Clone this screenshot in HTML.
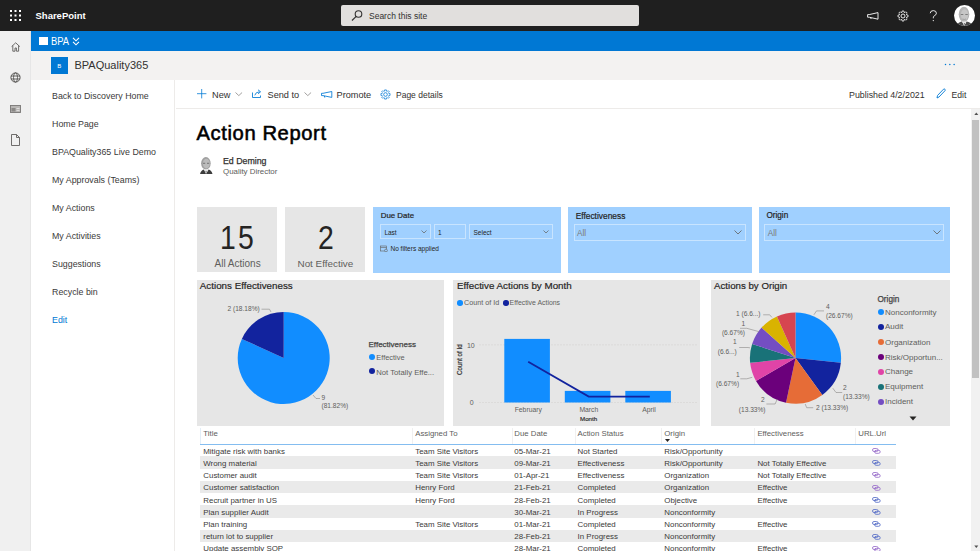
<!DOCTYPE html>
<html><head><meta charset="utf-8">
<style>
*{box-sizing:border-box;margin:0;padding:0}
html,body{width:980px;height:551px;overflow:hidden;background:#fff;font-family:"Liberation Sans",sans-serif;color:#323130}
.a{position:absolute;white-space:nowrap;line-height:1}
#suite{position:absolute;left:0;top:0;width:980px;height:31px;background:#1f1f1f}
#rail{position:absolute;left:0;top:31px;width:31px;height:520px;background:#f0f0f0;border-right:1px solid #e6e6e6}
#hub{position:absolute;left:31px;top:31px;width:949px;height:20px;background:#0078d4}
#site{position:absolute;left:31px;top:51px;width:949px;height:29px;background:#f3f2f1}
#nav{position:absolute;left:31px;top:80px;width:144px;height:471px;background:#fff;border-right:1px solid #edebe9}
#cmd{position:absolute;left:176px;top:80px;width:804px;height:29px;background:#fff;border-bottom:1px solid #edebe9}
.navi{font-size:9.5px;color:#3b3a39;transform:scaleX(0.93);transform-origin:0 0}
.cmdt{font-size:9.2px;color:#323130;margin-top:0.5px}
.card{position:absolute;background:#e6e6e6}
.slicer{position:absolute;background:#a0d0ff}
.sbox{position:absolute;border:1px solid #c8e4ff}
.chart{position:absolute;background:#e6e6e6}
.ct{font-size:9.8px;font-weight:400;color:#252423;-webkit-text-stroke:0.18px #252423}
.lbl{font-size:6.6px;color:#605e5c}
.row{position:absolute;left:200px;width:696px;height:12.2px}
.cell{position:absolute;font-size:7.9px;color:#252423;top:2px}
</style></head><body>

<!-- suite bar -->
<div id="suite">
  <svg class="a" style="left:10px;top:10px" width="11" height="11" viewBox="0 0 11 11" fill="#fff">
    <rect x="0" y="0" width="2" height="2"/><rect x="4.5" y="0" width="2" height="2"/><rect x="9" y="0" width="2" height="2"/>
    <rect x="0" y="4.5" width="2" height="2"/><rect x="4.5" y="4.5" width="2" height="2"/><rect x="9" y="4.5" width="2" height="2"/>
    <rect x="0" y="9" width="2" height="2"/><rect x="4.5" y="9" width="2" height="2"/><rect x="9" y="9" width="2" height="2"/>
  </svg>
  <div class="a" style="left:35.5px;top:11px;font-size:9.5px;font-weight:700;color:#fff">SharePoint</div>
  <div class="a" style="left:341px;top:5px;width:298px;height:20.5px;background:#e1dfdd;border-radius:2px"></div>
  <svg class="a" style="left:351px;top:10px" width="12" height="11" viewBox="0 0 12 11"><circle cx="7.5" cy="4" r="3.3" fill="none" stroke="#323130" stroke-width="1.1"/><line x1="5.2" y1="6.4" x2="1" y2="10.5" stroke="#323130" stroke-width="1.2"/></svg>
  <div class="a" style="left:369px;top:11.5px;font-size:8.5px;color:#323130">Search this site</div>
  <!-- megaphone -->
  <svg class="a" style="left:867px;top:12px" width="12" height="8" viewBox="0 0 12 8"><path d="M0.6 2.6 H2.2 L11 0.6 V7.2 L2.2 5.2 H0.6 Z M3.5 5.5 L4.2 7" fill="none" stroke="#fff" stroke-width="0.9"/></svg>
  <!-- gear -->
  <svg class="a" style="left:897px;top:10px" width="12" height="12" viewBox="0 0 12 12"><circle cx="6" cy="6" r="2" fill="none" stroke="#fff" stroke-width="0.9"/><path d="M5.06 2.22 L5.01 1.00 L6.99 1.00 L6.94 2.22 L8.01 2.66 L8.83 1.76 L10.24 3.17 L9.34 3.99 L9.78 5.06 L11.00 5.01 L11.00 6.99 L9.78 6.94 L9.34 8.01 L10.24 8.83 L8.83 10.24 L8.01 9.34 L6.94 9.78 L6.99 11.00 L5.01 11.00 L5.06 9.78 L3.99 9.34 L3.17 10.24 L1.76 8.83 L2.66 8.01 L2.22 6.94 L1.00 6.99 L1.00 5.01 L2.22 5.06 L2.66 3.99 L1.76 3.17 L3.17 1.76 L3.99 2.66 Z" fill="none" stroke="#fff" stroke-width="0.75" stroke-linejoin="round"/></svg>
  <svg class="a" style="left:929px;top:10px" width="9" height="12" viewBox="0 0 9 12"><path d="M1.2 3.2 Q1.4 0.6 4.3 0.6 Q7.4 0.7 7.4 3.2 Q7.3 4.9 5.2 5.9 Q4.3 6.5 4.3 7.9 V8.3" fill="none" stroke="#fff" stroke-width="0.9"/><circle cx="4.3" cy="10.6" r="0.6" fill="#fff"/></svg>
  <!-- avatar -->
  <div class="a" style="left:954.3px;top:4.6px;width:21px;height:21px;border-radius:50%;background:#fff;overflow:hidden">
    <svg width="21" height="21" viewBox="0 0 21 21"><ellipse cx="10" cy="9.3" rx="5.3" ry="7.6" fill="#b4b4b4"/><ellipse cx="10.5" cy="9.8" rx="3.6" ry="5.6" fill="#c6c6c6"/><path d="M6.8 9.5 H9.3 M11.3 9.5 H13.8" stroke="#6a6a6a" stroke-width="0.8"/><path d="M8.5 14 Q10.3 15 12 14" stroke="#8a8a8a" stroke-width="0.6" fill="none"/><path d="M2 21 Q4 17 8 16.5 L10.3 20.5 L12.5 16.5 Q17 17 19 21 Z" fill="#4a4a4a"/><path d="M8 16.5 L10.3 21 L12.5 16.5 Z" fill="#e8e8e8"/><path d="M9.8 18 L10.3 21 L10.8 18 Z" fill="#555"/></svg>
  </div>
</div>

<!-- left rail -->
<div id="rail">
  <svg class="a" style="left:10.5px;top:11px" width="10" height="10" viewBox="0 0 10 10"><path d="M0.6 4.6 L4.7 0.8 L8.8 4.6 M1.8 3.6 V9.2 H4 V6 H5.4 V9.2 H7.6 V3.6" fill="none" stroke="#605e5c" stroke-width="0.9" stroke-linejoin="round"/></svg>
  <svg class="a" style="left:9.5px;top:41px" width="11" height="11" viewBox="0 0 11 11"><circle cx="5.5" cy="5.5" r="4.6" fill="none" stroke="#484644" stroke-width="0.9"/><ellipse cx="5.5" cy="5.5" rx="2" ry="4.6" fill="none" stroke="#484644" stroke-width="0.8"/><line x1="1" y1="4" x2="10" y2="4" stroke="#484644" stroke-width="0.8"/><line x1="1" y1="7" x2="10" y2="7" stroke="#484644" stroke-width="0.8"/></svg>
  <svg class="a" style="left:10px;top:74px" width="11" height="8" viewBox="0 0 11 8"><rect x="0.5" y="0.5" width="10" height="7" fill="#b8b6b4" stroke="#797775" stroke-width="0.9"/><rect x="1.5" y="3" width="4" height="3.5" fill="#8a8886"/><line x1="6.5" y1="3.5" x2="9.5" y2="3.5" stroke="#eee" stroke-width="0.7"/><line x1="6.5" y1="5.5" x2="9.5" y2="5.5" stroke="#eee" stroke-width="0.7"/></svg>
  <svg class="a" style="left:11px;top:103px" width="9" height="12" viewBox="0 0 9 12"><path d="M0.5 0.5 H5.5 L8.5 3.5 V11.5 H0.5 Z M5.5 0.5 V3.5 H8.5" fill="none" stroke="#605e5c" stroke-width="0.9"/></svg>
</div>

<!-- hub bar -->
<div id="hub">
  <div class="a" style="left:8px;top:6px;width:9px;height:8px;background:#fff"></div>
  <div class="a" style="left:20px;top:5.5px;font-size:10.4px;color:#fff;transform:scaleX(0.9);transform-origin:0 0">BPA</div>
  <svg class="a" style="left:41px;top:6px" width="8" height="9" viewBox="0 0 8 9"><path d="M1 0.8 L4 3.8 L7 0.8 M1 4.8 L4 7.8 L7 4.8" fill="none" stroke="#fff" stroke-width="1.1"/></svg>
</div>

<!-- site header -->
<div id="site">
  <div class="a" style="left:20px;top:5.5px;width:17px;height:17px;background:#0078d4"></div>
  <div class="a" style="left:26.3px;top:11.8px;font-size:6px;color:#fff">B</div>
  <div class="a" style="left:43.5px;top:9px;font-size:11px;color:#323130">BPAQuality365</div>
  <svg class="a" style="left:913px;top:12px" width="12" height="3" viewBox="0 0 12 3"><circle cx="1.5" cy="1.5" r="0.75" fill="#0078d4"/><circle cx="5.8" cy="1.5" r="0.75" fill="#0078d4"/><circle cx="10.1" cy="1.5" r="0.75" fill="#0078d4"/></svg>
</div>

<!-- left nav -->
<div id="nav">
  <div class="a navi" style="left:21px;top:10.7px">Back to Discovery Home</div>
  <div class="a navi" style="left:21px;top:38.7px">Home Page</div>
  <div class="a navi" style="left:21px;top:66.7px">BPAQuality365 Live Demo</div>
  <div class="a navi" style="left:21px;top:94.7px">My Approvals (Teams)</div>
  <div class="a navi" style="left:21px;top:122.7px">My Actions</div>
  <div class="a navi" style="left:21px;top:150.7px">My Activities</div>
  <div class="a navi" style="left:21px;top:178.7px">Suggestions</div>
  <div class="a navi" style="left:21px;top:206.7px">Recycle bin</div>
  <div class="a navi" style="left:21px;top:234.7px;color:#0078d4">Edit</div>
</div>

<!-- command bar -->
<div id="cmd">
  <svg class="a" style="left:20.5px;top:8.9px" width="10" height="10" viewBox="0 0 10 10"><path d="M4.7 0 V9.4 M0 4.7 H9.4" stroke="#0078d4" stroke-width="0.8"/></svg>
  <div class="a cmdt" style="left:36px;top:10px">New</div>
  <svg class="a" style="left:59px;top:11.7px" width="8" height="5" viewBox="0 0 8 5"><path d="M0.5 0.5 L3.8 3.6 L7.1 0.5" fill="none" stroke="#8a8886" stroke-width="0.8"/></svg>
  <svg class="a" style="left:76px;top:9px" width="11" height="9" viewBox="0 0 11 9"><path d="M0.5 3.5 V8.5 H8.5 V6.5 M2.8 6.3 Q3.5 3 7.5 2.8 M6 0.8 L8.6 2.8 L6 4.8" fill="none" stroke="#0078d4" stroke-width="0.85"/></svg>
  <div class="a cmdt" style="left:91.5px;top:10px">Send to</div>
  <svg class="a" style="left:128px;top:11.7px" width="8" height="5" viewBox="0 0 8 5"><path d="M0.5 0.5 L3.8 3.6 L7.1 0.5" fill="none" stroke="#8a8886" stroke-width="0.8"/></svg>
  <svg class="a" style="left:145px;top:10.5px" width="12" height="8" viewBox="0 0 12 8"><path d="M0.5 2.3 H2 L10.8 0.5 V6.4 L2 4.6 H0.5 Z M3.3 4.9 L3.8 6.6" fill="none" stroke="#0078d4" stroke-width="0.85"/></svg>
  <div class="a cmdt" style="left:160.5px;top:10px">Promote</div>
  <svg class="a" style="left:204px;top:8.5px" width="11" height="11" viewBox="0 0 12 12"><circle cx="6" cy="6" r="2" fill="none" stroke="#0078d4" stroke-width="0.85"/><path d="M5.06 2.22 L5.01 1.00 L6.99 1.00 L6.94 2.22 L8.01 2.66 L8.83 1.76 L10.24 3.17 L9.34 3.99 L9.78 5.06 L11.00 5.01 L11.00 6.99 L9.78 6.94 L9.34 8.01 L10.24 8.83 L8.83 10.24 L8.01 9.34 L6.94 9.78 L6.99 11.00 L5.01 11.00 L5.06 9.78 L3.99 9.34 L3.17 10.24 L1.76 8.83 L2.66 8.01 L2.22 6.94 L1.00 6.99 L1.00 5.01 L2.22 5.06 L2.66 3.99 L1.76 3.17 L3.17 1.76 L3.99 2.66 Z" fill="none" stroke="#0078d4" stroke-width="0.75" stroke-linejoin="round"/></svg>
  <div class="a cmdt" style="left:220px;top:10px;font-size:9.2px;transform:scaleX(0.925);transform-origin:0 0">Page details</div>
  <div class="a cmdt" style="left:673px;top:10px;font-size:9.3px;transform:scaleX(0.95);transform-origin:0 0">Published 4/2/2021</div>
  <svg class="a" style="left:760px;top:8px" width="10" height="11" viewBox="0 0 10 11"><path d="M1 10 L1.5 7.5 L7.5 1.2 Q8.3 0.6 9 1.3 Q9.6 2 9 2.7 L3 9 Z" fill="none" stroke="#0078d4" stroke-width="0.9"/></svg>
  <div class="a cmdt" style="left:775.5px;top:10px;font-size:8.6px">Edit</div>
</div>

<!-- scrollbar -->
<div class="a" style="left:971px;top:109px;width:9px;height:442px;background:#f1f1f1"></div>
<div class="a" style="left:972px;top:120px;width:7px;height:258px;background:#c1c1c1"></div>
<svg class="a" style="left:973.5px;top:111.5px" width="5" height="4" viewBox="0 0 5 4"><path d="M0.3 3 L2.3 0.6 L4.3 3Z" fill="#505050"/></svg>
<svg class="a" style="left:973.5px;top:544.5px" width="5" height="4" viewBox="0 0 5 4"><path d="M0.3 0.6 L2.3 3 L4.3 0.6Z" fill="#505050"/></svg>

<!-- page title -->
<div class="a" style="left:196.5px;top:122.8px;font-size:20.2px;font-weight:400;color:#000;letter-spacing:0.6px;-webkit-text-stroke:0.55px #000">Action Report</div>
<svg class="a" style="left:199px;top:156px" width="15" height="19" viewBox="0 0 15 19"><ellipse cx="6.9" cy="7.3" rx="4.8" ry="6.2" fill="#a0a0a0"/><ellipse cx="7.3" cy="7.6" rx="3.5" ry="4.8" fill="#bbb"/><path d="M4 7.3 H6.2 M8 7.3 H10.2" stroke="#555" stroke-width="0.7"/><path d="M1 18 Q2 14 5 13.5 L7 17.5 L9.5 13.5 Q12.5 14 13.5 18 Z" fill="#3d3d3d"/><path d="M5 13.5 L7 18 L9.5 13.5Z" fill="#e2e2e2"/><path d="M6.6 15 L7 18 L7.5 15Z" fill="#444"/></svg>
<div class="a" style="left:223px;top:157px;font-size:8.8px;color:#323130;-webkit-text-stroke:0.25px #323130">Ed Deming</div>
<div class="a" style="left:223px;top:168px;font-size:7.9px;color:#605e5c">Quality Director</div>


<!-- cards -->
<div class="card" style="left:197px;top:207px;width:80px;height:65px"></div>
<div class="a" style="left:220px;top:221px;font-size:33px;color:#252423;transform:scaleX(0.86);transform-origin:0 0;letter-spacing:2.5px">15</div>
<div class="a" style="left:214.5px;top:259px;font-size:10px;color:#605e5c">All Actions</div>
<div class="card" style="left:285px;top:207px;width:80px;height:65px"></div>
<div class="a" style="left:317.5px;top:221px;font-size:33px;color:#252423;transform:scaleX(0.86);transform-origin:0 0">2</div>
<div class="a" style="left:297.5px;top:259px;font-size:9.9px;color:#605e5c">Not Effective</div>

<!-- slicers -->
<div class="slicer" style="left:373px;top:207px;width:188px;height:65.5px"></div>
<div class="a" style="left:380.7px;top:211.5px;font-size:7.9px;color:#252423;-webkit-text-stroke:0.2px #252423">Due Date</div>
<div class="sbox" style="left:380px;top:224px;width:51px;height:15px"></div>
<div class="a" style="left:384.4px;top:229.5px;font-size:6.5px;color:#252423">Last</div>
<svg class="a" style="left:421px;top:230px" width="6" height="4" viewBox="0 0 6 4"><path d="M0.5 0.5 L3 3 L5.5 0.5" fill="none" stroke="#605e5c" stroke-width="0.7"/></svg>
<div class="sbox" style="left:434px;top:224px;width:32px;height:15px"></div>
<div class="a" style="left:438px;top:229.5px;font-size:6.5px;color:#252423">1</div>
<div class="sbox" style="left:469px;top:224px;width:84px;height:15px"></div>
<div class="a" style="left:473.5px;top:229.5px;font-size:6.5px;color:#252423">Select</div>
<svg class="a" style="left:543px;top:230px" width="6" height="4" viewBox="0 0 6 4"><path d="M0.5 0.5 L3 3 L5.5 0.5" fill="none" stroke="#605e5c" stroke-width="0.7"/></svg>
<svg class="a" style="left:380px;top:245px" width="8" height="7" viewBox="0 0 8 7"><rect x="0.5" y="1" width="6" height="5" fill="none" stroke="#605e5c" stroke-width="0.6"/><line x1="0.5" y1="2.5" x2="6.5" y2="2.5" stroke="#605e5c" stroke-width="0.6"/><circle cx="6" cy="5.5" r="1.4" fill="#a0d0ff" stroke="#605e5c" stroke-width="0.6"/></svg>
<div class="a" style="left:390.5px;top:245.5px;font-size:6.5px;color:#252423">No filters applied</div>

<div class="slicer" style="left:568px;top:207px;width:184px;height:65.5px"></div>
<div class="a" style="left:575.7px;top:211.5px;font-size:8.4px;color:#252423;-webkit-text-stroke:0.2px #252423">Effectiveness</div>
<div class="sbox" style="left:574px;top:224px;width:172px;height:17px"></div>
<div class="a" style="left:577px;top:229.5px;font-size:8.2px;color:#7a7876">All</div>
<svg class="a" style="left:734px;top:230px" width="8" height="5" viewBox="0 0 8 5"><path d="M0.5 0.5 L4 4 L7.5 0.5" fill="none" stroke="#605e5c" stroke-width="0.8"/></svg>

<div class="slicer" style="left:759px;top:207px;width:191px;height:65.5px"></div>
<div class="a" style="left:766.4px;top:211.5px;font-size:8.2px;color:#252423;-webkit-text-stroke:0.2px #252423">Origin</div>
<div class="sbox" style="left:764px;top:224px;width:180px;height:17px"></div>
<div class="a" style="left:767.7px;top:229.5px;font-size:8.2px;color:#7a7876">All</div>
<svg class="a" style="left:933px;top:230px" width="8" height="5" viewBox="0 0 8 5"><path d="M0.5 0.5 L4 4 L7.5 0.5" fill="none" stroke="#605e5c" stroke-width="0.8"/></svg>

<!-- chart 1 -->
<div class="chart" style="left:197px;top:280px;width:247px;height:146px"></div>
<div class="a ct" style="left:199.8px;top:280.7px">Actions Effectiveness</div>
<svg class="a" style="left:0;top:0" width="980" height="551">
<path d="M283.7,358 L283.70,312.00 A46,46 0 1 1 241.86,338.89 Z" fill="#118dff"/>
<path d="M283.7,358 L241.86,338.89 A46,46 0 0 1 283.70,312.00 Z" fill="#12239e"/>
<path d="M261.5,309.2 H269.5 L271,312" fill="none" stroke="#8a8886" stroke-width="0.6"/>
<path d="M313,395 L316,398.5 H320" fill="none" stroke="#8a8886" stroke-width="0.6"/>
</svg>
<div class="a lbl" style="left:227.5px;top:306px">2 (18.18%)</div>
<div class="a lbl" style="left:321.5px;top:394.5px">9</div>
<div class="a lbl" style="left:321.5px;top:403px">(81.82%)</div>
<div class="a" style="left:368.5px;top:341px;font-size:8px;color:#444;-webkit-text-stroke:0.25px #444">Effectiveness</div>
<div class="a" style="left:369px;top:353.7px;width:6px;height:6px;border-radius:50%;background:#118dff"></div>
<div class="a" style="left:376.3px;top:353.5px;font-size:7.4px;color:#605e5c">Effective</div>
<div class="a" style="left:369px;top:368.3px;width:6px;height:6px;border-radius:50%;background:#12239e"></div>
<div class="a" style="left:376.3px;top:368.5px;font-size:7.7px;color:#605e5c">Not Totally Effe...</div>

<!-- chart 2 -->
<div class="chart" style="left:453px;top:280px;width:247px;height:146px"></div>
<div class="a ct" style="left:457px;top:280.7px">Effective Actions by Month</div>
<div class="a" style="left:457px;top:300px;width:5.5px;height:5.5px;border-radius:50%;background:#118dff"></div>
<div class="a" style="left:464px;top:299px;font-size:7.2px;color:#605e5c">Count of Id</div>
<div class="a" style="left:503px;top:300px;width:5.5px;height:5.5px;border-radius:50%;background:#12239e"></div>
<div class="a" style="left:509.6px;top:300px;font-size:6.9px;color:#605e5c">Effective Actions</div>
<div class="a" style="left:456.5px;top:374.8px;font-size:6.3px;color:#333;-webkit-text-stroke:0.2px #333;transform:rotate(-90deg);transform-origin:0 0">Count of Id</div>
<div class="a lbl" style="left:466.9px;top:341.5px;font-size:7px">10</div>
<div class="a lbl" style="left:469.7px;top:399px;font-size:7px">0</div>
<svg class="a" style="left:0;top:0" width="980" height="551">
<line x1="479.5" y1="344.8" x2="697.6" y2="344.8" stroke="#c8c6c4" stroke-width="0.7" stroke-dasharray="1,2"/>
<line x1="479.5" y1="402.5" x2="697.6" y2="402.5" stroke="#c8c6c4" stroke-width="0.7" stroke-dasharray="1,2"/>
<rect x="504.3" y="338.9" width="45.6" height="63.6" fill="#118dff"/>
<rect x="564.8" y="390.9" width="45.6" height="11.6" fill="#118dff"/>
<rect x="625.3" y="390.9" width="45.6" height="11.6" fill="#118dff"/>
<polyline points="528.2,361.7 588.7,396.6 649.8,396.6" fill="none" stroke="#12239e" stroke-width="1.8"/>
</svg>
<div class="a lbl" style="left:514.7px;top:406.5px;font-size:6.8px">February</div>
<div class="a lbl" style="left:579.4px;top:406.5px;font-size:6.8px">March</div>
<div class="a lbl" style="left:642.2px;top:406.5px;font-size:6.8px">April</div>
<div class="a" style="left:580px;top:416.3px;font-size:6.2px;color:#333;-webkit-text-stroke:0.2px #333">Month</div>

<!-- chart 3 -->
<div class="chart" style="left:711px;top:280px;width:239px;height:146px"></div>
<div class="a ct" style="left:714px;top:280.7px;font-size:9.7px">Actions by Origin</div>
<svg class="a" style="left:0;top:0" width="980" height="551">
<path d="M795.5,358.1 L795.50,312.50 A45.6,45.6 0 0 1 840.85,362.87 Z" fill="#118dff"/>
<path d="M795.5,358.1 L840.85,362.87 A45.6,45.6 0 0 1 822.30,394.99 Z" fill="#12239e"/>
<path d="M795.5,358.1 L822.30,394.99 A45.6,45.6 0 0 1 786.02,402.70 Z" fill="#e66c37"/>
<path d="M795.5,358.1 L786.02,402.70 A45.6,45.6 0 0 1 756.01,380.90 Z" fill="#6b007b"/>
<path d="M795.5,358.1 L756.01,380.90 A45.6,45.6 0 0 1 750.15,362.87 Z" fill="#e044a7"/>
<path d="M795.5,358.1 L750.15,362.87 A45.6,45.6 0 0 1 752.13,344.01 Z" fill="#197278"/>
<path d="M795.5,358.1 L752.13,344.01 A45.6,45.6 0 0 1 761.61,327.59 Z" fill="#744ec2"/>
<path d="M795.5,358.1 L761.61,327.59 A45.6,45.6 0 0 1 776.95,316.44 Z" fill="#d9b300"/>
<path d="M795.5,358.1 L776.95,316.44 A45.6,45.6 0 0 1 795.50,312.50 Z" fill="#d64550"/>
</svg>
<svg class="a" style="left:0;top:0" width="980" height="551"><g fill="none" stroke="#8a8886" stroke-width="0.6">
<path d="M813.9,314.8 L816.5,310.9 H824"/>
<path d="M832.8,388.2 L836,392.5 H842.2"/>
<path d="M805.2,404 L806.7,407.7 H813.2"/>
<path d="M777.3,399 L775.1,404 H766.4"/>
<path d="M752.3,377.3 L746.8,378.8 H740.3"/>
<path d="M750.1,347.9 L748,347.5 H739.2"/>
<path d="M740,328.3 H746.8 L758.8,331.6"/>
<path d="M763.2,314.8 H769.7 L771.9,317.4"/>
</g></svg>
<div class="a lbl" style="left:826px;top:303.5px">4</div>
<div class="a lbl" style="left:826px;top:313px">(26.67%)</div>
<div class="a lbl" style="left:843px;top:384.5px">2</div>
<div class="a lbl" style="left:843px;top:394px">(13.33%)</div>
<div class="a lbl" style="left:816px;top:405px">2 (13.33%)</div>
<div class="a lbl" style="left:761px;top:396.5px">2</div>
<div class="a lbl" style="left:738.8px;top:406.5px">(13.33%)</div>
<div class="a lbl" style="left:736px;top:371.5px">1</div>
<div class="a lbl" style="left:716px;top:380.5px">(6.67%)</div>
<div class="a lbl" style="left:733px;top:339px">1</div>
<div class="a lbl" style="left:717.7px;top:349px">(6.6...)</div>
<div class="a lbl" style="left:741.6px;top:320.5px">1</div>
<div class="a lbl" style="left:721.9px;top:330px">(6.67%)</div>
<div class="a lbl" style="left:736px;top:311px">1 (6.6...)</div>
<div class="a" style="left:877.5px;top:296px;font-size:8.2px;color:#444;-webkit-text-stroke:0.25px #444">Origin</div>
<div class="a" style="left:878px;top:309.2px;width:6px;height:6px;border-radius:50%;background:#118dff"></div>
<div class="a" style="left:885px;top:308.1px;font-size:8px;color:#605e5c;margin-top:0.8px">Nonconformity</div>
<div class="a" style="left:878px;top:323.8px;width:6px;height:6px;border-radius:50%;background:#12239e"></div>
<div class="a" style="left:885px;top:322.7px;font-size:8px;color:#605e5c;margin-top:0.8px">Audit</div>
<div class="a" style="left:878px;top:339.0px;width:6px;height:6px;border-radius:50%;background:#e66c37"></div>
<div class="a" style="left:885px;top:337.9px;font-size:8px;color:#605e5c;margin-top:0.8px">Organization</div>
<div class="a" style="left:878px;top:354.2px;width:6px;height:6px;border-radius:50%;background:#6b007b"></div>
<div class="a" style="left:885px;top:353.1px;font-size:8px;color:#605e5c;margin-top:0.8px">Risk/Opportun...</div>
<div class="a" style="left:878px;top:368.8px;width:6px;height:6px;border-radius:50%;background:#e044a7"></div>
<div class="a" style="left:885px;top:367.7px;font-size:8px;color:#605e5c;margin-top:0.8px">Change</div>
<div class="a" style="left:878px;top:383.8px;width:6px;height:6px;border-radius:50%;background:#197278"></div>
<div class="a" style="left:885px;top:382.7px;font-size:8px;color:#605e5c;margin-top:0.8px">Equipment</div>
<div class="a" style="left:878px;top:398.7px;width:6px;height:6px;border-radius:50%;background:#744ec2"></div>
<div class="a" style="left:885px;top:397.6px;font-size:8px;color:#605e5c;margin-top:0.8px">Incident</div>

<svg class="a" style="left:909px;top:416px" width="8" height="5" viewBox="0 0 8 5"><path d="M0.5 0.5 L7.5 0.5 L4 4.5Z" fill="#252423"/></svg>

<!-- table -->
<div class="a" style="left:200px;top:428px;width:1px;height:16px;background:#e3eef8"></div>
<div class="a" style="left:411.6px;top:428px;width:1px;height:16px;background:#f0f0f0"></div>
<div class="a" style="left:511.7px;top:428px;width:1px;height:16px;background:#f0f0f0"></div>
<div class="a" style="left:574.5px;top:428px;width:1px;height:16px;background:#f0f0f0"></div>
<div class="a" style="left:661px;top:428px;width:1px;height:16px;background:#f0f0f0"></div>
<div class="a" style="left:754px;top:428px;width:1px;height:16px;background:#f0f0f0"></div>
<div class="a" style="left:855px;top:428px;width:1px;height:16px;background:#f0f0f0"></div>
<div class="a" style="left:203.3px;top:430.2px;font-size:7.8px;color:#605e5c">Title</div>
<div class="a" style="left:415.2px;top:430.2px;font-size:7.8px;color:#605e5c">Assigned To</div>
<div class="a" style="left:514.3px;top:430.2px;font-size:7.8px;color:#605e5c">Due Date</div>
<div class="a" style="left:577.6px;top:430.2px;font-size:7.8px;color:#605e5c">Action Status</div>
<div class="a" style="left:664.3px;top:430.2px;font-size:7.8px;color:#605e5c">Origin</div>
<div class="a" style="left:757.4px;top:430.2px;font-size:7.8px;color:#605e5c">Effectiveness</div>
<div class="a" style="left:858.3px;top:430.2px;font-size:7.8px;color:#605e5c">URL.Url</div>
<svg class="a" style="left:664.5px;top:439px" width="6" height="4" viewBox="0 0 6 4"><path d="M0 0 H5 L2.5 3Z" fill="#252423"/></svg>
<div class="a" style="left:200px;top:444.2px;width:696px;height:12.3px;background:#fff"></div>
<div class="a" style="left:203.3px;top:447.6px;font-size:7.9px;color:#3b3a39">Mitigate risk with banks</div>
<div class="a" style="left:415.2px;top:447.6px;font-size:7.9px;color:#3b3a39">Team Site Visitors</div>
<div class="a" style="left:514.3px;top:447.6px;font-size:7.9px;color:#3b3a39">05-Mar-21</div>
<div class="a" style="left:577.6px;top:447.6px;font-size:7.9px;color:#3b3a39">Not Started</div>
<div class="a" style="left:664.3px;top:447.6px;font-size:7.9px;color:#3b3a39">Risk/Opportunity</div>
<svg class="a" style="left:871.5px;top:448.0px" width="9" height="6" viewBox="0 0 9 6"><rect x="0.5" y="0.5" width="5.6" height="3" rx="1.5" fill="none" stroke="#9a6fcb" stroke-width="0.85"/><rect x="2.6" y="2.3" width="5.6" height="3" rx="1.5" fill="none" stroke="#9a6fcb" stroke-width="0.85"/></svg>
<div class="a" style="left:200px;top:456.4px;width:696px;height:12.3px;background:#eaeaea"></div>
<div class="a" style="left:203.3px;top:459.8px;font-size:7.9px;color:#3b3a39">Wrong material</div>
<div class="a" style="left:415.2px;top:459.8px;font-size:7.9px;color:#3b3a39">Team Site Visitors</div>
<div class="a" style="left:514.3px;top:459.8px;font-size:7.9px;color:#3b3a39">09-Mar-21</div>
<div class="a" style="left:577.6px;top:459.8px;font-size:7.9px;color:#3b3a39">Effectiveness</div>
<div class="a" style="left:664.3px;top:459.8px;font-size:7.9px;color:#3b3a39">Risk/Opportunity</div>
<div class="a" style="left:757.4px;top:459.8px;font-size:7.9px;color:#3b3a39">Not Totally Effective</div>
<svg class="a" style="left:871.5px;top:460.2px" width="9" height="6" viewBox="0 0 9 6"><rect x="0.5" y="0.5" width="5.6" height="3" rx="1.5" fill="none" stroke="#5a70c8" stroke-width="0.85"/><rect x="2.6" y="2.3" width="5.6" height="3" rx="1.5" fill="none" stroke="#5a70c8" stroke-width="0.85"/></svg>
<div class="a" style="left:200px;top:468.6px;width:696px;height:12.3px;background:#fff"></div>
<div class="a" style="left:203.3px;top:472.0px;font-size:7.9px;color:#3b3a39">Customer audit</div>
<div class="a" style="left:415.2px;top:472.0px;font-size:7.9px;color:#3b3a39">Team Site Visitors</div>
<div class="a" style="left:514.3px;top:472.0px;font-size:7.9px;color:#3b3a39">01-Apr-21</div>
<div class="a" style="left:577.6px;top:472.0px;font-size:7.9px;color:#3b3a39">Effectiveness</div>
<div class="a" style="left:664.3px;top:472.0px;font-size:7.9px;color:#3b3a39">Organization</div>
<div class="a" style="left:757.4px;top:472.0px;font-size:7.9px;color:#3b3a39">Not Totally Effective</div>
<svg class="a" style="left:871.5px;top:472.4px" width="9" height="6" viewBox="0 0 9 6"><rect x="0.5" y="0.5" width="5.6" height="3" rx="1.5" fill="none" stroke="#9a6fcb" stroke-width="0.85"/><rect x="2.6" y="2.3" width="5.6" height="3" rx="1.5" fill="none" stroke="#9a6fcb" stroke-width="0.85"/></svg>
<div class="a" style="left:200px;top:480.9px;width:696px;height:12.3px;background:#eaeaea"></div>
<div class="a" style="left:203.3px;top:484.3px;font-size:7.9px;color:#3b3a39">Customer satisfaction</div>
<div class="a" style="left:415.2px;top:484.3px;font-size:7.9px;color:#3b3a39">Henry Ford</div>
<div class="a" style="left:514.3px;top:484.3px;font-size:7.9px;color:#3b3a39">21-Feb-21</div>
<div class="a" style="left:577.6px;top:484.3px;font-size:7.9px;color:#3b3a39">Completed</div>
<div class="a" style="left:664.3px;top:484.3px;font-size:7.9px;color:#3b3a39">Organization</div>
<div class="a" style="left:757.4px;top:484.3px;font-size:7.9px;color:#3b3a39">Effective</div>
<svg class="a" style="left:871.5px;top:484.7px" width="9" height="6" viewBox="0 0 9 6"><rect x="0.5" y="0.5" width="5.6" height="3" rx="1.5" fill="none" stroke="#9a6fcb" stroke-width="0.85"/><rect x="2.6" y="2.3" width="5.6" height="3" rx="1.5" fill="none" stroke="#9a6fcb" stroke-width="0.85"/></svg>
<div class="a" style="left:200px;top:493.1px;width:696px;height:12.3px;background:#fff"></div>
<div class="a" style="left:203.3px;top:496.5px;font-size:7.9px;color:#3b3a39">Recruit partner in US</div>
<div class="a" style="left:415.2px;top:496.5px;font-size:7.9px;color:#3b3a39">Henry Ford</div>
<div class="a" style="left:514.3px;top:496.5px;font-size:7.9px;color:#3b3a39">28-Feb-21</div>
<div class="a" style="left:577.6px;top:496.5px;font-size:7.9px;color:#3b3a39">Completed</div>
<div class="a" style="left:664.3px;top:496.5px;font-size:7.9px;color:#3b3a39">Objective</div>
<div class="a" style="left:757.4px;top:496.5px;font-size:7.9px;color:#3b3a39">Effective</div>
<svg class="a" style="left:871.5px;top:496.9px" width="9" height="6" viewBox="0 0 9 6"><rect x="0.5" y="0.5" width="5.6" height="3" rx="1.5" fill="none" stroke="#5a70c8" stroke-width="0.85"/><rect x="2.6" y="2.3" width="5.6" height="3" rx="1.5" fill="none" stroke="#5a70c8" stroke-width="0.85"/></svg>
<div class="a" style="left:200px;top:505.3px;width:696px;height:12.3px;background:#eaeaea"></div>
<div class="a" style="left:203.3px;top:508.7px;font-size:7.9px;color:#3b3a39">Plan supplier Audit</div>
<div class="a" style="left:514.3px;top:508.7px;font-size:7.9px;color:#3b3a39">30-Mar-21</div>
<div class="a" style="left:577.6px;top:508.7px;font-size:7.9px;color:#3b3a39">In Progress</div>
<div class="a" style="left:664.3px;top:508.7px;font-size:7.9px;color:#3b3a39">Nonconformity</div>
<svg class="a" style="left:871.5px;top:509.1px" width="9" height="6" viewBox="0 0 9 6"><rect x="0.5" y="0.5" width="5.6" height="3" rx="1.5" fill="none" stroke="#5a70c8" stroke-width="0.85"/><rect x="2.6" y="2.3" width="5.6" height="3" rx="1.5" fill="none" stroke="#5a70c8" stroke-width="0.85"/></svg>
<div class="a" style="left:200px;top:517.5px;width:696px;height:12.3px;background:#fff"></div>
<div class="a" style="left:203.3px;top:520.9px;font-size:7.9px;color:#3b3a39">Plan training</div>
<div class="a" style="left:415.2px;top:520.9px;font-size:7.9px;color:#3b3a39">Team Site Visitors</div>
<div class="a" style="left:514.3px;top:520.9px;font-size:7.9px;color:#3b3a39">01-Mar-21</div>
<div class="a" style="left:577.6px;top:520.9px;font-size:7.9px;color:#3b3a39">Completed</div>
<div class="a" style="left:664.3px;top:520.9px;font-size:7.9px;color:#3b3a39">Nonconformity</div>
<div class="a" style="left:757.4px;top:520.9px;font-size:7.9px;color:#3b3a39">Effective</div>
<svg class="a" style="left:871.5px;top:521.3px" width="9" height="6" viewBox="0 0 9 6"><rect x="0.5" y="0.5" width="5.6" height="3" rx="1.5" fill="none" stroke="#5a70c8" stroke-width="0.85"/><rect x="2.6" y="2.3" width="5.6" height="3" rx="1.5" fill="none" stroke="#5a70c8" stroke-width="0.85"/></svg>
<div class="a" style="left:200px;top:529.7px;width:696px;height:12.3px;background:#eaeaea"></div>
<div class="a" style="left:203.3px;top:533.1px;font-size:7.9px;color:#3b3a39">return lot to supplier</div>
<div class="a" style="left:514.3px;top:533.1px;font-size:7.9px;color:#3b3a39">28-Feb-21</div>
<div class="a" style="left:577.6px;top:533.1px;font-size:7.9px;color:#3b3a39">In Progress</div>
<div class="a" style="left:664.3px;top:533.1px;font-size:7.9px;color:#3b3a39">Nonconformity</div>
<svg class="a" style="left:871.5px;top:533.5px" width="9" height="6" viewBox="0 0 9 6"><rect x="0.5" y="0.5" width="5.6" height="3" rx="1.5" fill="none" stroke="#5a70c8" stroke-width="0.85"/><rect x="2.6" y="2.3" width="5.6" height="3" rx="1.5" fill="none" stroke="#5a70c8" stroke-width="0.85"/></svg>
<div class="a" style="left:200px;top:542.0px;width:696px;height:12.3px;background:#fff"></div>
<div class="a" style="left:203.3px;top:545.4px;font-size:7.9px;color:#3b3a39">Update assembly SOP</div>
<div class="a" style="left:514.3px;top:545.4px;font-size:7.9px;color:#3b3a39">28-Mar-21</div>
<div class="a" style="left:577.6px;top:545.4px;font-size:7.9px;color:#3b3a39">Completed</div>
<div class="a" style="left:664.3px;top:545.4px;font-size:7.9px;color:#3b3a39">Nonconformity</div>
<div class="a" style="left:757.4px;top:545.4px;font-size:7.9px;color:#3b3a39">Effective</div>
<svg class="a" style="left:871.5px;top:545.8px" width="9" height="6" viewBox="0 0 9 6"><rect x="0.5" y="0.5" width="5.6" height="3" rx="1.5" fill="none" stroke="#9a6fcb" stroke-width="0.85"/><rect x="2.6" y="2.3" width="5.6" height="3" rx="1.5" fill="none" stroke="#9a6fcb" stroke-width="0.85"/></svg>
<div class="a" style="left:200px;top:443.8px;width:696px;height:1px;background:#84bdf0"></div>

</body></html>
